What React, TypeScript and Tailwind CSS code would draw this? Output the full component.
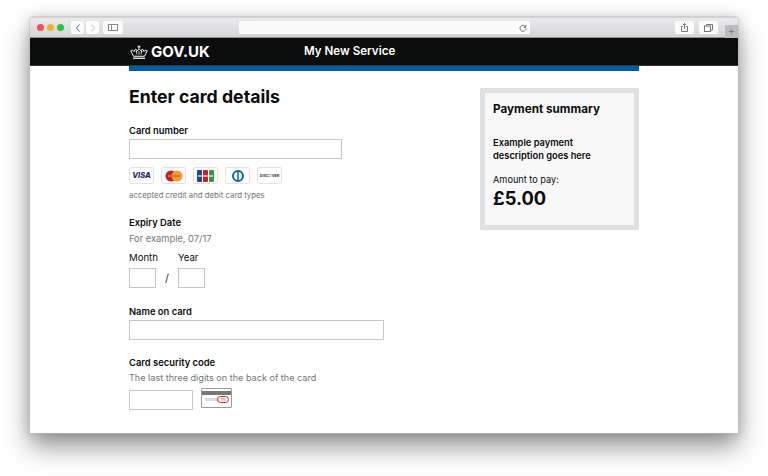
import React from 'react';

const Card: React.FC<{ children: React.ReactNode }> = ({ children }) => (
    <div className="w-[25px] h-[17px] rounded-[2px] border border-[#e3e3e3] bg-white flex items-center justify-center overflow-hidden">
        {children}
    </div>
);

const ToolButton: React.FC<{ className?: string; children?: React.ReactNode }> = ({ className, children }) => (
    <div className={`h-[13px] bg-[#fbfbfb] rounded-[2px] flex items-center justify-center ${className ?? ''}`}>{children}</div>
);

const Crown = () => (
    <svg width="18" height="14" viewBox="0 0 36 28" fill="none" stroke="#fff">
        <path d="M6 26.500h24" strokeWidth="2.500" />
        <path d="M18 1v6M15 3.500h6" strokeWidth="2" />
        <path d="M7 22.500C5 18 3 15 1.500 11.500c2.500-1.500 5-1 6.500 1.500.5-2.500 1.500-4 3.500-5 1.500 2 1.500 4 .5 6 2-1 3-4 6-6.500 3 2.500 4 5.500 6 6.500-1-2-1-4 .5-6 2 1 3 2.500 3.500 5 1.500-2.500 4-3 6.500-1.500C33 15 31 18 29 22.500z" strokeWidth="2" />
        <path d="M18 12v7M13 14l1 5M23 14l-1 5" strokeWidth="1.500" />
    </svg>
);

const App: React.FC = () => {
    return (
        <div className="w-[768px] h-[476px] bg-white pl-[30px] pt-[17px] overflow-hidden font-['Inter','Liberation_Sans',sans-serif]">
            <div className="w-[708px] h-[416px] flex flex-col bg-white rounded-t-[3px] shadow-[0_0_0_0.5px_#bbb,0_14px_26px_rgba(0,0,0,0.42),0_0_14px_rgba(0,0,0,0.16)]">
                {/* browser toolbar */}
                <div className="h-[21px] shrink-0 flex items-center bg-gradient-to-b from-[#ebebed] to-[#d5d5d8] border-t border-[#d4d4d6] border-b border-b-[#8d8d8f] rounded-t-[3px] relative">
                    <div className="flex gap-[3px] ml-[7px]">
                        <div className="w-[7px] h-[7px] rounded-full bg-[#f2514c]" />
                        <div className="w-[7px] h-[7px] rounded-full bg-[#f5b02e]" />
                        <div className="w-[7px] h-[7px] rounded-full bg-[#2cc13f]" />
                    </div>
                    <div className="flex gap-[2px] ml-[7px]">
                        <ToolButton className="w-[13px]">
                            <svg width="6" height="8" viewBox="0 0 6 8" fill="none" stroke="#666"><path d="M4.500 .5 1.500 4l3 3.500" /></svg>
                        </ToolButton>
                        <ToolButton className="w-[13px]">
                            <svg width="6" height="8" viewBox="0 0 6 8" fill="none" stroke="#c4c4c4"><path d="M1.500 .5 4.500 4l-3 3.500" /></svg>
                        </ToolButton>
                    </div>
                    <ToolButton className="w-[20px] ml-[4px]">
                        <svg width="10" height="7" viewBox="0 0 10 7" fill="none" stroke="#888"><rect x=".5" y=".5" width="9" height="6" /><path d="M3.500 .5v6" /></svg>
                    </ToolButton>
                    <ToolButton className="w-[291px] ml-[116px] justify-end pr-[3px]">
                        <svg width="8" height="8" viewBox="0 0 8 8" fill="none" stroke="#777"><path d="M6.800 3.200A3 3 0 1 0 7 4.500M6.800 1v2.300H4.700" /></svg>
                    </ToolButton>
                    <ToolButton className="w-[19px] ml-[145px]">
                        <svg width="7" height="9" viewBox="0 0 7 9" fill="none" stroke="#777"><path d="M2 3.500H.5v5h6v-5H5M3.500 6V.5M2 2 3.500.5 5 2" /></svg>
                    </ToolButton>
                    <ToolButton className="w-[19px] ml-[5px]">
                        <svg width="9" height="8" viewBox="0 0 9 8" fill="none" stroke="#777"><rect x=".5" y="2" width="6" height="5.500" /><path d="M2.500 2V.5h6V6H6.500" /></svg>
                    </ToolButton>
                    <div className="absolute right-0 top-[7px] w-[13px] h-[13px] bg-[#bcbcbf] flex items-center justify-center text-[#777] text-[11px] leading-none">+</div>
                </div>

                {/* GOV.UK header */}
                <div className="h-[28px] shrink-0 bg-[#0b0c0c] flex items-center pl-[100px] text-white border-b border-[#333]">
                    <Crown />
                    <span className="ml-[3px] w-[153px] text-[15px] font-bold leading-none">GOV.UK</span>
                    <span className="text-[11.600px] font-semibold leading-none">My New Service</span>
                </div>

                <div className="flex-1 px-[99px]">
                    <div className="h-[5px] bg-[#005ea5]" />
                    <div className="flex justify-between">
                        {/* form */}
                        <div className="text-[#0b0c0c]">
                            <h1 className="text-[17.700px] font-bold leading-[24px] mt-[14px]">Enter card details</h1>

                            <label className="block text-[9.400px] font-semibold leading-[12px] mt-[16px]">Card number</label>
                            <div className="w-[213px] h-[20px] border-[1.500px] border-[#c6c6c6] mt-[2px]" />
                            <div className="flex gap-[7px] mt-[8px]">
                                <Card><span className="text-[7.500px] font-extrabold italic text-[#1a2a72] leading-none">VISA</span></Card>
                                <Card>
                                    <svg width="18" height="12" viewBox="0 0 18 12"><circle cx="6" cy="6" r="5.500" fill="#cc1f1a" /><circle cx="12" cy="6" r="5.500" fill="#f59e1c" /><rect x="3" y="5" width="12" height="2" fill="#b9776a" /></svg>
                                </Card>
                                <Card>
                                    <svg width="17" height="12" viewBox="0 0 17 12"><rect width="5" height="12" rx="1" fill="#21458f" /><rect x="6" width="5" height="12" rx="1" fill="#c8202f" /><rect x="12" width="5" height="12" rx="1" fill="#2c9a46" /><rect x="1" y="5" width="15" height="2" fill="#fff" opacity=".6" /></svg>
                                </Card>
                                <Card>
                                    <svg width="14" height="12" viewBox="0 0 14 12" fill="none"><circle cx="7" cy="6" r="5" stroke="#0a6ba8" strokeWidth="2" /><path d="M7 2v8" stroke="#0a6ba8" strokeWidth="1.500" /></svg>
                                </Card>
                                <Card><span className="text-[3.800px] font-bold text-[#333] leading-none">DISC<span className="text-[#f08a1d]">O</span>VER</span></Card>
                            </div>
                            <p className="text-[7.800px] text-[#6f777b] leading-[11px] mt-[6px]">accepted credit and debit card types</p>

                            <label className="block text-[9.400px] font-semibold leading-[12px] mt-[16px]">Expiry Date</label>
                            <p className="text-[9.300px] text-[#6f777b] leading-[12px] mt-[4px]">For example, 07/17</p>
                            <div className="flex mt-[7px] text-[9.600px] leading-[12px]">
                                <span className="w-[49px]">Month</span>
                                <span>Year</span>
                            </div>
                            <div className="flex items-center mt-[4px]">
                                <div className="w-[27px] h-[20px] border-[1.500px] border-[#c6c6c6]" />
                                <span className="w-[22px] text-center text-[11px] text-[#333]">/</span>
                                <div className="w-[27px] h-[20px] border-[1.500px] border-[#c6c6c6]" />
                            </div>

                            <label className="block text-[9.400px] font-semibold leading-[12px] mt-[18px]">Name on card</label>
                            <div className="w-[255px] h-[20px] border-[1.500px] border-[#c6c6c6] mt-[2px]" />

                            <label className="block text-[9.400px] font-semibold leading-[12px] mt-[17px]">Card security code</label>
                            <p className="text-[9.100px] text-[#6f777b] leading-[12px] mt-[3px]">The last three digits on the back of the card</p>
                            <div className="flex items-start mt-[4px]">
                                <div className="w-[64px] h-[20px] border-[1.500px] border-[#c6c6c6] mt-[2px]" />
                                <div className="w-[31px] h-[20px] ml-[8px] relative border border-[#9a9a9a] rounded-[1px] bg-white">
                                    <div className="h-[4px] mt-[2px] bg-[#777]" />
                                    <div className="absolute left-[3px] top-[9px] w-[14px] h-[3px] bg-[#ddd]" />
                                    <div className="absolute right-[2px] top-[7px] w-[12px] h-[7px] border border-[#e0201c] rounded-full flex items-center justify-center text-[4px] leading-none text-[#555]">111</div>
                                </div>
                            </div>
                        </div>

                        {/* payment summary */}
                        <aside className="w-[159px] h-[142px] mt-[17px] border-[5px] border-[#dee0e2] bg-[#f8f8f8] px-[8px] text-[#0b0c0c]">
                            <h2 className="text-[11.700px] font-bold leading-[16px] mt-[8px]">Payment summary</h2>
                            <p className="text-[9.300px] font-semibold leading-[13px] mt-[19px] max-w-[115px]">Example payment description goes here</p>
                            <p className="text-[9.200px] leading-[12px] mt-[12px]">Amount to pay:</p>
                            <p className="text-[18.300px] font-bold leading-[22px] mt-[1px]">£5.00</p>
                        </aside>
                    </div>
                </div>
            </div>
        </div>
    );
};

export default App;
